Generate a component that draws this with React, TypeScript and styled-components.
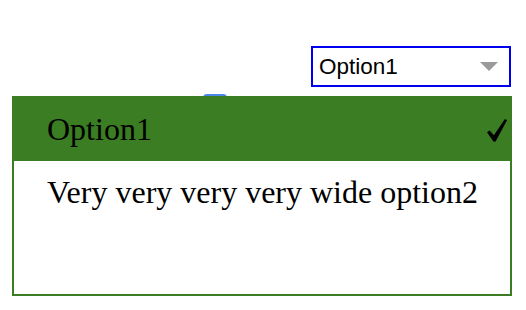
import React, { useState } from 'react';
import styled, { createGlobalStyle } from 'styled-components';

const options = ['Option1', 'Very very very very wide option2'];

export default function App() {
  const [selected, setSelected] = useState(0);

  return (
    <>
      <GlobalStyle />
      <Page>
        <Trigger>
          <TriggerLabel>{options[selected]}</TriggerLabel>
          <Caret viewBox="0 0 18 9" aria-hidden>
            <path d="M0 0 H18 L9 9 Z" fill="#9a9a9a" />
          </Caret>
        </Trigger>
        <ListWrap>
          <FocusNub />
          <List role="listbox">
            {options.map((opt, i) => (
              <Item
                key={opt}
                role="option"
                $active={i === selected}
                aria-selected={i === selected}
                onClick={() => setSelected(i)}
              >
                <span>{opt}</span>
                {i === selected && (
                  <Check viewBox="0 0 20 23" aria-hidden>
                    <path
                      d="M0 13.2 L2.6 11.4 L6.9 16.2 L17.9 0 L20 1.3 L8.6 22.6 L6.6 22.8 Z"
                      fill="#000"
                    />
                  </Check>
                )}
              </Item>
            ))}
          </List>
        </ListWrap>
      </Page>
    </>
  );
}

const GlobalStyle = createGlobalStyle`
  html, body {
    margin: 0;
    padding: 0;
    background: #ffffff;
  }
`;

const Page = styled.div`
  width: 526px;
  height: 310px;
  padding-top: 46px;
  box-sizing: border-box;
  display: flex;
  flex-direction: column;
`;

const Trigger = styled.div`
  margin-left: 311px;
  width: 200px;
  height: 41px;
  box-sizing: border-box;
  border: 2px solid #0000ee;
  display: flex;
  align-items: center;
  justify-content: space-between;
  padding: 0 11px 0 6px;
  font-family: 'Liberation Sans', Arial, sans-serif;
  font-size: 22.5px;
  color: #000;
`;

const TriggerLabel = styled.span`
  line-height: 1;
  padding-top: 1px;
`;

const Caret = styled.svg`
  width: 18px;
  height: 9px;
  margin-top: -1px;
`;

const ListWrap = styled.div`
  position: relative;
  margin-top: 9px;
  margin-left: 12px;
  width: 500px;
`;

const FocusNub = styled.div`
  position: absolute;
  left: 191px;
  top: -2px;
  width: 24px;
  height: 6px;
  border-radius: 4px 4px 0 0;
  background: #4a86e8;
`;

const List = styled.div`
  position: relative;
  height: 200px;
  box-sizing: border-box;
  border: 2px solid #3a7d22;
  background: #ffffff;
  display: flex;
  flex-direction: column;
`;

const Item = styled.div<{ $active: boolean }>`
  height: ${(p) => (p.$active ? '63px' : '62px')};
  flex-shrink: 0;
  display: flex;
  align-items: center;
  justify-content: space-between;
  padding: 0 3px 0 33px;
  background: ${(p) => (p.$active ? '#3a7d22' : 'transparent')};
  font-family: 'Liberation Serif', 'Times New Roman', serif;
  font-size: 32px;
  color: #000;
  cursor: pointer;
  white-space: nowrap;
`;

const Check = styled.svg`
  width: 20px;
  height: 23px;
  margin-top: 2px;
`;
